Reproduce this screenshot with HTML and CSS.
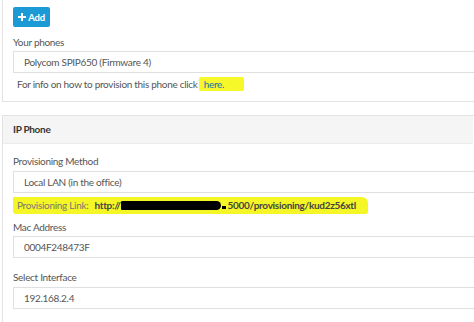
FILE: index.html
```html
<!DOCTYPE html>
<html>
<head>
<meta charset="utf-8">
<link rel="stylesheet" href="styles.css">
</head>
<body>
<div class="page">
  <div class="panel panel-top">
    <div class="panel-body first">
      <button class="btn-add"><svg class="plus" viewBox="0 0 8 8" width="8" height="8"><path d="M3 0h2v3h3v2H5v3H3V5H0V3h3z" fill="#fff"/></svg>Add</button>
      <label class="label l-phones">Your phones</label>
      <div class="input i-phones">Polycom SPIP650 (Firmware 4)</div>
      <p class="help">For info on how to provision this phone click<span class="hl-here"><a class="here">here.</a></span></p>
    </div>
  </div>
  <div class="panel panel-ip">
    <div class="panel-heading">IP Phone</div>
    <div class="panel-body">
      <label class="label l-method">Provisioning Method</label>
      <div class="input i-method">Local LAN (in the office)</div>
      <p class="link-line"><span class="hl-link"><span class="link-label">Provisioning Link:</span><b class="url">http://<span class="redact"></span><span class="tick"></span>5000/provisioning/kud2z56xtl</b></span></p>
      <label class="label l-mac">Mac Address</label>
      <div class="input i-mac">0004F248473F</div>
      <label class="label l-iface">Select Interface</label>
      <div class="input i-iface">192.168.2.4</div>
    </div>
  </div>
</div>
</body>
</html>
```
FILE: styles.css
```css
* { box-sizing: border-box; }
html, body { margin: 0; padding: 0; background: #fff; overflow: hidden; }
body { width: 474px; height: 322px; font-family: Lato, "Noto Sans", sans-serif; font-size: 10px; letter-spacing: -0.3px; color: #555; }
.page { padding-left: 2px; }
.panel { border: 1px solid #e3e3e3; width: 478px; background: #fff; }
.panel-top { border-top: none; height: 102px; }
.panel-ip { margin-top: 13px; height: 220px; }
.panel-body { padding: 0 10px; display: flex; flex-direction: column; align-items: flex-start; }
.panel-body.first { padding-top: 7px; }
.btn-add { background: #1b9ad6; color: #fff; border: none; border-radius: 2px; height: 20px; width: 37px; padding: 0; font-family: inherit; font-size: 9.5px; letter-spacing: -0.2px; font-weight: bold; display: flex; align-items: center; justify-content: center; gap: 2px; }
.plus { display: block; }
.label { display: block; line-height: 14px; height: 14px; }
.l-phones { margin-top: 8px; }
.l-method { margin-top: 0; }
.l-mac { margin-top: 6px; }
.l-iface { margin-top: 12px; }
.panel-heading { background: #f5f5f5; border-bottom: 1px solid #ececec; height: 28px; line-height: 27px; padding-left: 10px; font-weight: bold; color: #333; width: 470px; }
.panel-ip .panel-body { padding-top: 10px; }
.input { width: 470px; height: 22px; border: 1px solid #e0e0e0; padding-left: 10px; line-height: 20px; color: #555; }
.i-phones { margin-top: 2px; }
.i-method { margin-top: 3px; }
.i-mac { margin-top: 2px; }
.i-iface { margin-top: 3px; }
.help { margin: 4px 0 0 4px; line-height: 14px; white-space: nowrap; }
.hl-here { background: #f6f82a; display: inline-block; padding: 0 20px 0 5px; margin-left: 1px; border-radius: 2px; }
.here { color: #1b6fb0; }
.link-line { margin: 4px 0 0 0; white-space: nowrap; line-height: 14px; }
.hl-link { background: #f5f625; display: inline-block; padding: 1px 4px 2px 4px; width: 355px; border-radius: 0 6px 2px 3px; }
.link-label { color: #777; margin-right: 6px; }
.url { color: #444; }
.redact { display: inline-block; width: 100px; height: 9px; background: #000; vertical-align: -1px; border-radius: 2px 8px 8px 2px; }
.tick { display: inline-block; width: 4px; height: 3px; background: #000; margin: 0 2px 0 1px; }
```
